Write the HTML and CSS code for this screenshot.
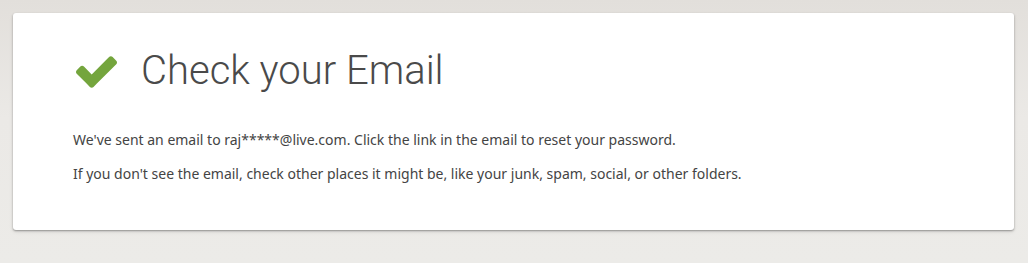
FILE: index.html
```html
<!DOCTYPE html>
<html>
<head>
<meta charset="utf-8">
<link rel="stylesheet" href="styles.css">
</head>
<body>
<div class="card">
  <div class="title-row">
    <svg class="check" viewBox="121 334 1550 1188" width="41" height="32" aria-hidden="true">
      <path d="M1671 566q0 40-28 68l-724 724-136 136q-28 28-68 28t-68-28l-136-136-362-362q-28-28-28-68t28-68l136-136q28-28 68-28t68 28l294 295 656-657q28-28 68-28t68 28l136 136q28 28 28 68z"/>
    </svg>
    <h1 class="title">Check your Email</h1>
  </div>
  <p class="msg">We've sent an email to raj*****@live.com. Click the link in the email to reset your password.</p>
  <p class="msg">If you don't see the email, check other places it might be, like your junk, spam, social, or other folders.</p>
</div>
</body>
</html>
```

FILE: styles.css
```css
html, body {
  margin: 0;
  padding: 0;
}
body {
  height: 263px;
  background: linear-gradient(to bottom, #e2dfdb 0%, #ebe9e6 45%, #ecebe8 100%);
  padding: 13px 14px 0 13px;
  box-sizing: border-box;
}
.card {
  background: #fff;
  border-radius: 3px;
  box-shadow: 0 1px 2px rgba(0,0,0,0.35), 0 2px 4px rgba(0,0,0,0.08);
  padding: 33px 60px 31px 60px;
  height: 217px;
  box-sizing: border-box;
}
.title-row {
  display: flex;
  align-items: center;
  gap: 24px;
  margin-left: 3px;
}
.check {
  fill: #74a53d;
  flex: none;
  margin-top: 2px;
}
.title {
  margin: 0;
  font-family: Roboto, "Liberation Sans", sans-serif;
  font-weight: 300;
  font-size: 40px;
  line-height: 50px;
  color: #4a4a4a;
}
.msg {
  margin: 0;
  font-family: "Noto Sans", "DejaVu Sans", sans-serif;
  font-size: 14px;
  line-height: 20px;
  color: #444;
}
.title-row + .msg {
  margin-top: 34px;
}
.msg + .msg {
  margin-top: 14px;
}
```
